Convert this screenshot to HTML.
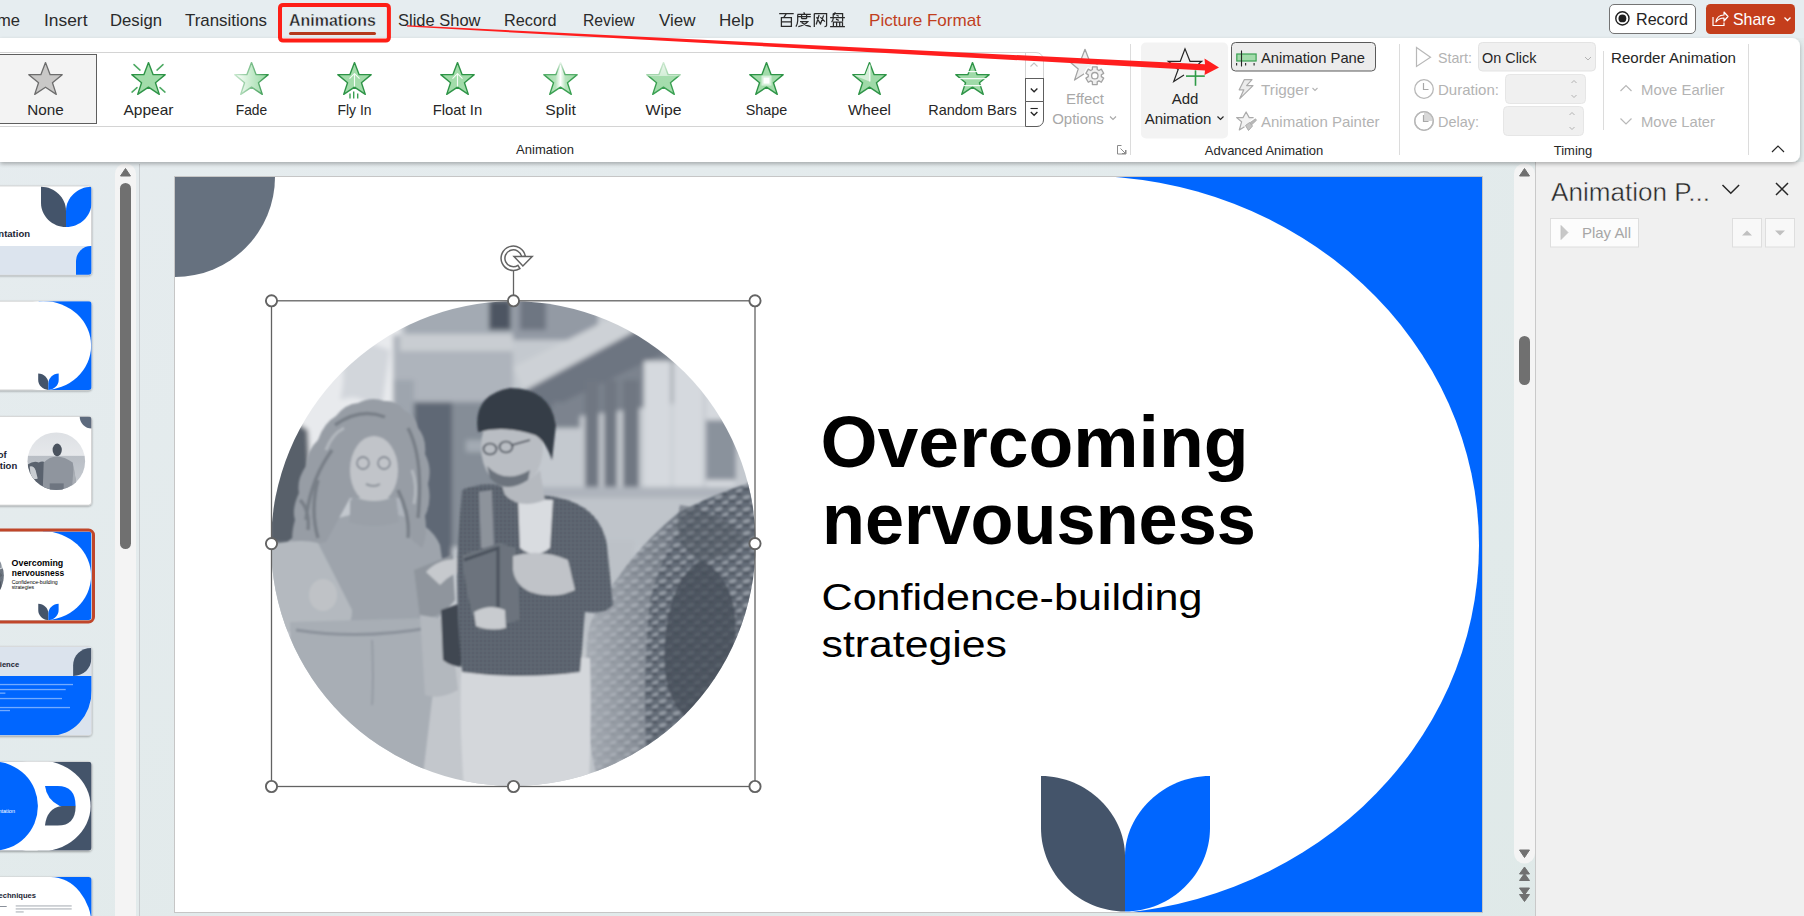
<!DOCTYPE html>
<html><head><meta charset="utf-8">
<style>
*{margin:0;padding:0}
html,body{width:1804px;height:916px;overflow:hidden;background:#e5ebee}
svg{display:block;font-family:"Liberation Sans", sans-serif}
</style></head><body>
<svg width="1804" height="916" viewBox="0 0 1804 916">
<defs><linearGradient id="bgG" x1="0" y1="0" x2="1" y2="1"><stop offset="0" stop-color="#e6ecef"/><stop offset="1" stop-color="#dfe9e8"/></linearGradient><linearGradient id="gFade" x1="0" y1="0" x2="1" y2="0"><stop offset="0" stop-color="#ffffff"/><stop offset="0.5" stop-color="#c6ebcc"/><stop offset="1" stop-color="#94d6a0"/></linearGradient><linearGradient id="gFadeS" x1="0" y1="0" x2="1" y2="0"><stop offset="0" stop-color="#c9e8cf"/><stop offset="1" stop-color="#2e9447"/></linearGradient><linearGradient id="gSplit" x1="0" y1="0" x2="1" y2="0"><stop offset="0" stop-color="#9ad8a4"/><stop offset="0.35" stop-color="#b5e3bc"/><stop offset="0.5" stop-color="#ffffff"/><stop offset="0.65" stop-color="#b5e3bc"/><stop offset="1" stop-color="#9ad8a4"/></linearGradient><linearGradient id="gSplitS" x1="0" y1="0" x2="0" y2="1"><stop offset="0" stop-color="#e8f5ea"/><stop offset="0.45" stop-color="#3aa052"/><stop offset="1" stop-color="#3aa052"/></linearGradient><linearGradient id="gWipe" x1="0" y1="0" x2="0" y2="1"><stop offset="0" stop-color="#eef8ef"/><stop offset="0.42" stop-color="#d3eed7"/><stop offset="0.43" stop-color="#a6ddae"/><stop offset="1" stop-color="#a2dcaa"/></linearGradient><linearGradient id="gWipeS" x1="0" y1="0" x2="0" y2="1"><stop offset="0" stop-color="#cde9d1"/><stop offset="0.42" stop-color="#9fd3a8"/><stop offset="0.45" stop-color="#3aa052"/><stop offset="1" stop-color="#3aa052"/></linearGradient><radialGradient id="gShape"><stop offset="0" stop-color="#ffffff"/><stop offset="0.35" stop-color="#c8ebce"/><stop offset="1" stop-color="#8fd49b"/></radialGradient><linearGradient id="bgAdd" x1="0" y1="0" x2="0" y2="1"><stop offset="0" stop-color="#f3f3f3"/><stop offset="1" stop-color="#f3f3f3"/></linearGradient><filter id="rsh" x="-5%" y="-20%" width="110%" height="140%"><feGaussianBlur in="SourceAlpha" stdDeviation="2"/><feOffset dy="1.5"/><feComponentTransfer><feFuncA type="linear" slope="0.28"/></feComponentTransfer><feMerge><feMergeNode/><feMergeNode in="SourceGraphic"/></feMerge></filter></defs>
<rect x="0" y="0" width="1804" height="916" fill="url(#bgG)"/>
<path d="M115,174 a10.5,10.5 0 0 1 21,0 V916 H115Z" fill="#f4f4f4"/>
<path d="M120.5,176 L125.5,168.5 L130.5,176Z" fill="#707070" stroke="#707070" stroke-width="1" stroke-linejoin="round"/>
<rect x="120" y="183" width="11" height="366" rx="5.5" fill="#707070"/>
<line x1="139.5" y1="164" x2="139.5" y2="916" stroke="#c9cdd0"/>
<rect x="174" y="176" width="1309" height="737" fill="#c6c6c6"/>
<path d="M1514,174 a10.5,10.5 0 0 1 21,0 V853 a10.5,10.5 0 0 1 -21,0Z" fill="#f4f4f4"/>
<path d="M1519.5,176 L1524.5,168.5 L1529.5,176Z" fill="#707070" stroke="#707070" stroke-width="1" stroke-linejoin="round"/>
<path d="M1519.5,850 L1529.5,850 L1524.5,857.5Z" fill="#707070" stroke="#707070" stroke-width="1" stroke-linejoin="round"/>
<rect x="1519" y="336" width="11" height="49" rx="5.5" fill="#707070"/>
<g fill="#707070" stroke="#707070" stroke-width="1" stroke-linejoin="round"><path d="M1519.5,874 L1524.5,867 L1529.5,874Z"/><path d="M1519.5,880.5 L1524.5,873.5 L1529.5,880.5Z"/><path d="M1519.5,888 L1529.5,888 L1524.5,895Z"/><path d="M1519.5,894.5 L1529.5,894.5 L1524.5,901.5Z"/></g>
<rect x="1535" y="162" width="269" height="754" fill="#f0f0f0"/>
<line x1="1535.5" y1="162" x2="1535.5" y2="916" stroke="#c9c9c9"/>
<text x="1551" y="201" font-size="26" fill="#262626" text-anchor="start" font-weight="400" textLength="159" lengthAdjust="spacingAndGlyphs" stroke="#f0f0f0" stroke-width="0.45">Animation P...</text>
<path d="M1722.5,185 l8.3,8.3 l8.3,-8.3" fill="none" stroke="#262626" stroke-width="1.5"/>
<path d="M1776,183 l12,12 M1788,183 l-12,12" fill="none" stroke="#262626" stroke-width="1.5"/>
<rect x="1550.5" y="218.5" width="88" height="28.5" fill="#fcfcfc" stroke="#dedede"/>
<path d="M1561,225.5 L1568,232.5 L1561,239.5Z" fill="#c8c8c8" stroke="#c0c0c0" stroke-width="0.8"/>
<text x="1582" y="238" font-size="15" fill="#a6a6a6" text-anchor="start" font-weight="400" textLength="49" lengthAdjust="spacingAndGlyphs" >Play All</text>
<rect x="1732.5" y="218.5" width="29" height="28.5" fill="#f8f8f8" stroke="#dedede"/>
<rect x="1765.5" y="218.5" width="29" height="28.5" fill="#f8f8f8" stroke="#dedede"/>
<path d="M1742,235.5 L1747,230.5 L1752,235.5Z M1775,230.5 L1785,230.5 L1780,235.5Z" fill="#c0c0c0"/>
<defs><clipPath id="slideClip"><rect x="175" y="177" width="1307" height="735"/></clipPath><clipPath id="photoClip"><circle cx="513.3" cy="543.6" r="242.3"/></clipPath></defs>
<defs><g id="slideContent">
<rect x="175" y="177" width="1307" height="735" fill="#ffffff"/>
<path d="M175,177 H275 A100,100 0 0 1 175,277Z" fill="#66717f"/>
<rect x="1080" y="177" width="402" height="735" fill="#0066ff"/>
<ellipse clip-path="url(#slideClip)" cx="1082" cy="545.3" rx="397" ry="369.6" fill="#ffffff"/>
<path d="M1041,776 C1087,776 1125,814 1125,856 V911.5 C1079,911.5 1041,874 1041,828Z" fill="#44546a"/>
<path d="M1210,776 C1164,776 1125,814 1125,856 V911.5 C1171,911.5 1210,874 1210,828Z" fill="#0066ff"/>
<text x="820.5" y="466.5" font-size="71.5" fill="#000000" text-anchor="start" font-weight="700" textLength="428" lengthAdjust="spacingAndGlyphs" >Overcoming</text>
<text x="822" y="544" font-size="71.5" fill="#000000" text-anchor="start" font-weight="700" textLength="434" lengthAdjust="spacingAndGlyphs" >nervousness</text>
<text x="821.5" y="609.5" font-size="37.5" fill="#000000" text-anchor="start" font-weight="400" textLength="381" lengthAdjust="spacingAndGlyphs" >Confidence-building</text>
<text x="821.5" y="656.5" font-size="37.5" fill="#000000" text-anchor="start" font-weight="400" textLength="185.5" lengthAdjust="spacingAndGlyphs" >strategies</text>
<defs><filter id="pb2" x="-20%" y="-20%" width="140%" height="140%"><feGaussianBlur stdDeviation="2.5"/></filter><filter id="pb1" x="-20%" y="-20%" width="140%" height="140%"><feGaussianBlur stdDeviation="1"/></filter><pattern id="plaid" width="4" height="4" patternUnits="userSpaceOnUse"><rect width="4" height="4" fill="#646c77"/><rect width="2" height="2" fill="#3f4651"/></pattern><pattern id="bushP" width="14" height="12" patternUnits="userSpaceOnUse"><rect width="14" height="12" fill="#646c77"/><path d="M0,6 q4,-5 9,-2 q-3,5 -9,2z M7,12 q4,-5 8,-3 q-3,5 -8,3z" fill="#949ba4"/><path d="M2,10 q3,-2 5,0 M9,3 q2,-2 4,0" stroke="#444c57" stroke-width="1.5" fill="none"/></pattern></defs>
<g clip-path="url(#photoClip)">
<g filter="url(#pb2)">
<rect x="265" y="295" width="500" height="500" fill="#c3c8ce"/>
<path d="M265,295 H400 V440 L300,470 H265Z" fill="#e8eaed"/>
<path d="M330,330 q20,30 10,70 q25,-10 40,20 l10,-70z" fill="#d2d6db"/>
<rect x="393" y="335" width="122" height="210" fill="#aeb4bc"/>
<rect x="405" y="295" width="110" height="40" fill="#a3aab3"/>
<rect x="400" y="334" width="115" height="17" fill="#c9cdd2"/>
<rect x="489" y="300" width="22" height="30" fill="#4d5562"/>
<rect x="452" y="402" width="63" height="145" fill="#858d97"/>
<rect x="466" y="440" width="40" height="12" fill="#a3aab3"/>
<rect x="414" y="402" width="38" height="160" fill="#5f6874"/>
<rect x="393" y="380" width="21" height="100" fill="#9ea5ae"/>
<path d="M268,425 q20,-10 40,5 l5,115 h-45z" fill="#58606b"/>
<rect x="513" y="295" width="250" height="250" fill="#c4c9cf"/>
<rect x="513" y="295" width="85" height="45" fill="#939aa4"/>
<rect x="520" y="298" width="26" height="32" fill="#6e7682"/>
<path d="M513,367 L625,311 L639,329 L524,391Z" fill="#cdd1d6"/>
<path d="M524,391 L639,329 L668,352 L545,412Z" fill="#6d7581"/>
<path d="M545,412 L668,352 L700,372 V400 L550,420Z" fill="#7b838e"/>
<rect x="553" y="402" width="27" height="26" fill="#7b838e"/>
<rect x="585" y="380" width="14" height="113" fill="#6f7782"/>
<rect x="604" y="380" width="13" height="113" fill="#6f7782"/>
<rect x="623" y="380" width="16" height="113" fill="#6f7782"/>
<rect x="644" y="361" width="27" height="126" fill="#d5d9de"/>
<rect x="673" y="361" width="30" height="126" fill="#d5d9de"/>
<rect x="706" y="361" width="29" height="126" fill="#d5d9de"/>
<rect x="706" y="420" width="30" height="60" fill="#8a929c"/>
<rect x="513" y="487" width="250" height="11" fill="#aeb4bc"/>
<rect x="540" y="498" width="225" height="50" fill="#bfc4ca"/>
<rect x="575" y="540" width="60" height="250" fill="#bcc1c7"/>
<rect x="400" y="650" width="190" height="145" fill="#c3c7cc"/>
</g>
<g filter="url(#pb1)">
<path d="M765,470 L746,484 Q700,500 677,514 Q640,545 618,578 Q595,605 589,630 Q584,675 587,710 Q590,760 605,800 H770Z" fill="url(#bushP)"/>
<path d="M700,560 Q740,580 735,640 Q720,700 690,720 Q660,700 665,640 Q670,580 700,560Z" fill="#454d58" opacity="0.75"/>
<defs><linearGradient id="bushL" x1="0" y1="0" x2="1" y2="0"><stop offset="0" stop-color="#b3b8bf" stop-opacity="0.85"/><stop offset="1" stop-color="#b3b8bf" stop-opacity="0"/></linearGradient></defs>
<path d="M677,514 Q640,545 618,578 Q595,605 589,630 Q584,675 587,710 Q590,760 605,800 H650 Q640,700 650,600 Q665,540 700,505Z" fill="url(#bushL)"/>
<path d="M680,505 Q720,510 745,540 Q730,560 700,560 Q670,545 680,505Z" fill="#4f5762" opacity="0.5"/>
</g>
<g filter="url(#pb1)">
<path d="M350,500 H396 L398,515 Q430,522 440,545 L448,600 Q440,625 425,625 L290,628 Q272,600 275,560 Q285,530 350,515Z" fill="#9ea4ac"/>
<path d="M294,548 Q289.9,537.8 295,520 Q291.5,508.8 299,493 Q296.5,479.4 306,466 Q306.8,450.1 318,440 Q323.8,422.9 336,416 Q345.9,403.6 358,403 Q371.8,396.1 384,401 Q396.5,400.0 404,410 Q414.8,414.4 418,428 Q426.6,437.8 425,454 Q432.4,468.0 428,484 Q432.2,501.7 425,516 Q428.1,535.8 422,548 L412,540 Q406,520 400,498 L350,498 Q338,520 326,542 Z" fill="#979da5"/>
<path d="M306,520 q4,-40 26,-70 M408,428 q16,30 10,90 M318,480 q-8,30 0,58 M398,490 q12,24 10,48 M335,425 q25,-18 50,-8 M300,500 q10,10 8,30" stroke="#6e757e" stroke-width="3.5" fill="none" opacity="0.75"/>
<path d="M326,450 q6,-16 18,-22 M412,470 q6,16 2,34" stroke="#c5c9ce" stroke-width="3" fill="none" opacity="0.6"/>
<ellipse cx="374" cy="470" rx="24" ry="34" fill="#c1c4c9"/>
<g fill="none" stroke="#6e7580" stroke-width="1.3"><circle cx="363" cy="463" r="6"/><circle cx="384" cy="463" r="6"/></g>
<path d="M366,484 q8,4 14,0" stroke="#8a9098" stroke-width="2" fill="none"/>
<path d="M352,496 Q374,506 396,496 L399,522 Q374,530 349,522Z" fill="#9aa0a8"/>
<path d="M272,545 Q300,538 318,543 L352,610 Q352,628 340,630 L285,632 Q272,620 272,600Z" fill="#b4b9bf"/>
<ellipse cx="323" cy="595" rx="14" ry="16" fill="#bfc2c6"/>
<path d="M414,570 L452,555 L455,600 Q440,620 420,618Z" fill="#8f959d"/>
<path d="M426,572 Q440,556 466,560 L470,568 Q452,572 440,585Z" fill="#c6c9cd"/>
<path d="M290,622 L430,618 Q440,660 432,700 L420,800 H330 L318,740 Q296,690 290,650Z" fill="#a8aeb5"/>
<path d="M372,640 Q374,680 372,705" stroke="#8d949c" stroke-width="2" fill="none" opacity="0.7"/>
<path d="M296,630 Q360,640 428,628" stroke="#8b929b" stroke-width="3" fill="none"/>
<path d="M420,615 L450,620 L458,690 Q440,700 425,695Z" fill="#b3b8be"/>
<path d="M441,610 L470,600 L475,665 Q455,670 443,660Z" fill="#3f4651"/>
<path d="M462,655 L590,658 Q592,720 588,800 H465 Q458,720 462,655Z" fill="#d4d7db"/>
<path d="M462,490 Q490,478 520,492 L555,497 Q600,505 607,545 L613,605 Q605,615 585,612 L580,672 Q520,680 462,672 Q455,600 458,540Z" fill="url(#plaid)"/>
<path d="M518,498 L553,500 L550,548 Q535,560 520,548Z" fill="#d9dce0"/>
<path d="M479,492 L492,490 L494,548 L481,548Z" fill="#8d939b"/>
<ellipse cx="512" cy="447" rx="31" ry="42" fill="#b9bdc3"/>
<path d="M500,480 Q520,495 540,470 L545,500 Q520,510 505,495Z" fill="#b5b9bf"/>
<path d="M478,432 Q472,395 510,388 Q550,388 556,425 L552,460 Q545,440 535,435 Q505,425 478,432Z" fill="#353c47"/>
<path d="M487,466 Q505,485 530,470 L528,480 Q505,495 490,478Z" fill="#6c737d"/>
<g fill="none" stroke="#3a414c" stroke-width="1.6"><ellipse cx="490" cy="449" rx="6.5" ry="5.5"/><ellipse cx="506" cy="447" rx="6.5" ry="5.5"/><path d="M512,445 l18,-5"/></g>
<path d="M462,555 L500,543 L516,548 L520,620 L478,630 Q466,600 462,555Z" fill="#6c737d"/>
<path d="M464,560 L498,548 V620" stroke="#4a515c" stroke-width="3" fill="none"/>
<path d="M474,612 Q490,603 505,610 L506,628 Q490,632 476,626Z" fill="#c8cbcf"/>
<path d="M513,556 Q540,548 568,560 L575,590 Q555,600 530,592 Q515,585 513,570Z" fill="#c0c3c8"/>
</g>
</g>
</g></defs>
<g clip-path="url(#slideClip)"><use href="#slideContent"/></g>
<rect x="271.5" y="300.8" width="483.5" height="485.7" fill="none" stroke="#636363" stroke-width="1.3"/>
<line x1="513.5" y1="271" x2="513.5" y2="295" stroke="#636363" stroke-width="1.3"/>
<circle cx="271.5" cy="300.8" r="5.6" fill="#ffffff" stroke="#636363" stroke-width="1.9"/>
<circle cx="271.5" cy="543.6" r="5.6" fill="#ffffff" stroke="#636363" stroke-width="1.9"/>
<circle cx="271.5" cy="786.5" r="5.6" fill="#ffffff" stroke="#636363" stroke-width="1.9"/>
<circle cx="513.5" cy="300.8" r="5.6" fill="#ffffff" stroke="#636363" stroke-width="1.9"/>
<circle cx="513.5" cy="786.5" r="5.6" fill="#ffffff" stroke="#636363" stroke-width="1.9"/>
<circle cx="755" cy="300.8" r="5.6" fill="#ffffff" stroke="#636363" stroke-width="1.9"/>
<circle cx="755" cy="543.6" r="5.6" fill="#ffffff" stroke="#636363" stroke-width="1.9"/>
<circle cx="755" cy="786.5" r="5.6" fill="#ffffff" stroke="#636363" stroke-width="1.9"/>
<path d="M525.3,256.2 A12.2,12.2 0 1 0 519.9,268.5 L517.9,265.3 A8.4,8.4 0 1 1 521.6,256.8 Z" fill="#ffffff" stroke="#636363" stroke-width="1.5"/>
<path d="M514,256.4 L532.2,256.4 L522.9,266Z" fill="#ffffff" stroke="#636363" stroke-width="1.5" stroke-linejoin="miter"/>
<defs><filter id="tsh" x="-10%" y="-10%" width="120%" height="130%"><feGaussianBlur in="SourceAlpha" stdDeviation="0.8"/><feOffset dy="0.6"/><feComponentTransfer><feFuncA type="linear" slope="0.35"/></feComponentTransfer><feMerge><feMergeNode/><feMergeNode in="SourceGraphic"/></feMerge></filter></defs>
<defs><clipPath id="tc0"><rect x="-66.3" y="186" width="157.8" height="88.7" rx="3"/></clipPath></defs>
<rect x="-66.3" y="186" width="157.8" height="88.7" rx="3" fill="#fff" stroke="#cfcfcf" stroke-width="0.8" filter="url(#tsh)"/>
<g clip-path="url(#tc0)">
<g transform="translate(-66.3,186)">
<rect x="0" y="60" width="158" height="29" fill="#dce4ee"/>
<path d="M142.3,89 V75 A15,15 0 0 1 157.3,60 H158 V89Z" fill="#0066ff"/>
<path d="M107.3,0.8 C121.05000000000001,0.8 132.3,12.056000000000003 132.3,24.92 V41 C118.55000000000001,41 107.3,29.744 107.3,16.880000000000003Z" fill="#44546a"/>
<path d="M157.8,0.8 C143.775,0.8 132.3,12.056000000000003 132.3,24.92 V41 C146.32500000000002,41 157.8,29.744 157.8,16.880000000000003Z" fill="#0066ff"/>
<text x="96.3" y="50.5" font-size="9.5" fill="#1b2433" text-anchor="end" font-weight="700" >Effective presentation</text>
</g></g>
<defs><clipPath id="tc1"><rect x="-66.3" y="301.2" width="157.8" height="88.7" rx="3"/></clipPath></defs>
<rect x="-66.3" y="301.2" width="157.8" height="88.7" rx="3" fill="#fff" stroke="#cfcfcf" stroke-width="0.8" filter="url(#tsh)"/>
<g clip-path="url(#tc1)">
<g transform="translate(-66.3,301.2)">
<rect x="105" y="0" width="53" height="89" fill="#0066ff"/>
<ellipse cx="109.5" cy="44.45" rx="47.9" ry="44.6" fill="#fff"/>
<path d="M104.5,72.4 C110.11,72.4 114.7,76.964 114.7,82.18 V88.7 C109.09,88.7 104.5,84.136 104.5,78.92Z" fill="#44546a"/>
<path d="M125,72.4 C119.33500000000001,72.4 114.7,76.964 114.7,82.18 V88.7 C120.365,88.7 125,84.136 125,78.92Z" fill="#0066ff"/>
</g></g>
<defs><clipPath id="tc2"><rect x="-66.3" y="416.4" width="157.8" height="88.7" rx="3"/></clipPath></defs>
<rect x="-66.3" y="416.4" width="157.8" height="88.7" rx="3" fill="#fff" stroke="#cfcfcf" stroke-width="0.8" filter="url(#tsh)"/>
<g clip-path="url(#tc2)">
<g transform="translate(-66.3,416.4)">
<path d="M158,0 V12 A12,12 0 0 1 146,0Z" fill="#5d6a7d"/>
<text x="73" y="42" font-size="9.5" fill="#1b2433" text-anchor="end" font-weight="700" >Importance of</text>
<text x="83.5" y="52.4" font-size="9.5" fill="#1b2433" text-anchor="end" font-weight="700" >preparation</text>
<defs><clipPath id="manC"><circle cx="122.6" cy="44.8" r="28.8"/></clipPath><linearGradient id="manBg" x1="0" y1="0" x2="0" y2="1"><stop offset="0" stop-color="#dde0e4"/><stop offset="0.4" stop-color="#e6e8eb"/><stop offset="0.41" stop-color="#b9bec5"/><stop offset="1" stop-color="#c9cdd3"/></linearGradient></defs>
<g clip-path="url(#manC)"><rect x="92" y="15" width="61" height="60" fill="url(#manBg)"/><path d="M94,48 q6,-4 11,-2 q6,-3 8,3 l4,26 h-25z" fill="#5a626e"/><path d="M96,50 q4,-1 6,4 l2,8 q-4,2 -7,-2z" fill="#c9cdd2"/><path d="M109,75 L110,46 Q116,40 123,40 Q131,40 139,46 L144,75z" fill="#8f959e"/><path d="M140,50 l4,25 h-6z" fill="#a9aeb5"/><ellipse cx="123.5" cy="33.5" rx="4.6" ry="6.3" fill="#4a525e"/><rect x="116" y="67" width="14" height="8" fill="#6e7580"/></g>
</g></g>
<defs><clipPath id="tc3"><rect x="-66.3" y="531.4" width="157.8" height="88.7" rx="3"/></clipPath></defs>
<rect x="-66.3" y="531.4" width="157.8" height="88.7" rx="3" fill="#fff" stroke="#cfcfcf" stroke-width="0.8" filter="url(#tsh)"/>
<g clip-path="url(#tc3)">
<g transform="translate(-66.3,531.4)">
<use href="#slideContent" transform="scale(0.1207) translate(-175,-177)"/>
</g></g>
<defs><clipPath id="tc4"><rect x="-66.3" y="646.6" width="157.8" height="88.7" rx="3"/></clipPath></defs>
<rect x="-66.3" y="646.6" width="157.8" height="88.7" rx="3" fill="#fff" stroke="#cfcfcf" stroke-width="0.8" filter="url(#tsh)"/>
<g clip-path="url(#tc4)">
<g transform="translate(-66.3,646.6)">
<rect x="0" y="0" width="158" height="89" fill="#dbe3ed"/>
<path d="M0,29.3 H158 V44 A41,45 0 0 1 116.3,89 H0Z" fill="#0066ff"/>
<path d="M157.6,1.5 V12 C157.6,22 150,29.3 139.4,29.3 V19 C139.4,9 147,1.5 157.6,1.5Z" fill="#44546a"/>
<text x="85.5" y="20.7" font-size="7.6" fill="#1b2433" text-anchor="end" font-weight="700" >Understanding the audience</text>
<rect x="0" y="37.3" width="139.3" height="1.3" fill="#ffffff" opacity="0.45"/>
<rect x="0" y="42.3" width="132.0" height="1.3" fill="#ffffff" opacity="0.45"/>
<rect x="0" y="45.9" width="71.7" height="1.3" fill="#ffffff" opacity="0.45"/>
<rect x="0" y="51.3" width="128.3" height="1.3" fill="#ffffff" opacity="0.45"/>
<rect x="0" y="60.3" width="136.3" height="1.3" fill="#ffffff" opacity="0.45"/>
<rect x="0" y="63.3" width="76.3" height="1.3" fill="#ffffff" opacity="0.45"/>
</g></g>
<defs><clipPath id="tc5"><rect x="-66.3" y="761.8" width="157.8" height="88.7" rx="3"/></clipPath></defs>
<rect x="-66.3" y="761.8" width="157.8" height="88.7" rx="3" fill="#fff" stroke="#cfcfcf" stroke-width="0.8" filter="url(#tsh)"/>
<g clip-path="url(#tc5)">
<g transform="translate(-66.3,761.8)">
<rect x="0" y="0" width="158" height="89" fill="#44546a"/>
<ellipse cx="103.7" cy="44.3" rx="53.2" ry="46" fill="#ffffff"/>
<rect x="0" y="0" width="104" height="89" fill="#ffffff"/>
<circle cx="59.6" cy="44.3" r="44.6" fill="#0066ff"/>
<path d="M111.3,24.3 H124 Q141.9,24.3 141.9,44.2 H126 Q113,38 111.3,24.3Z" fill="#0066ff"/>
<path d="M111.3,63.8 Q113,46.5 128,44.2 H141.9 Q141.9,63.8 124,63.8Z" fill="#44546a"/>
<text x="81.3" y="51.7" font-size="5.5" fill="#ffffff" text-anchor="end" font-weight="400" >Presentation</text>
</g></g>
<defs><clipPath id="tc6"><rect x="-66.3" y="877" width="157.8" height="88.7" rx="3"/></clipPath></defs>
<rect x="-66.3" y="877" width="157.8" height="88.7" rx="3" fill="#fff" stroke="#cfcfcf" stroke-width="0.8" filter="url(#tsh)"/>
<g clip-path="url(#tc6)">
<g transform="translate(-66.3,877)">
<rect x="110" y="0" width="48" height="89" fill="#0066ff"/>
<ellipse cx="117" cy="50" rx="41" ry="50" fill="#fff"/>
<rect x="0" y="0" width="117.5" height="89" fill="#ffffff"/>
<text x="102.3" y="21" font-size="7.6" fill="#1b2433" text-anchor="end" font-weight="700" >Body language techniques</text>
<rect x="62" y="29" width="11" height="1" fill="#8a909a"/>
<rect x="82" y="28.5" width="56" height="0.9" fill="#9aa0a8"/>
<rect x="82" y="31.5" width="56" height="0.9" fill="#9aa0a8"/>
<rect x="82" y="34.5" width="8" height="0.9" fill="#9aa0a8"/>
</g></g>
<path d="M-10,530 H88.5 a5,5 0 0 1 5,5 V617 a5,5 0 0 1 -5,5 H-10" fill="none" stroke="#c0462a" stroke-width="3"/>
<rect x="0" y="0" width="1804" height="38" fill="#e6edf0"/>
<text x="-3" y="26" font-size="17" fill="#2a2a2a" text-anchor="start" font-weight="400" textLength="23" lengthAdjust="spacingAndGlyphs" >me</text>
<text x="44" y="26" font-size="17" fill="#2a2a2a" text-anchor="start" font-weight="400" textLength="43.5" lengthAdjust="spacingAndGlyphs" >Insert</text>
<text x="110" y="26" font-size="17" fill="#2a2a2a" text-anchor="start" font-weight="400" textLength="52" lengthAdjust="spacingAndGlyphs" >Design</text>
<text x="185" y="26" font-size="17" fill="#2a2a2a" text-anchor="start" font-weight="400" textLength="82" lengthAdjust="spacingAndGlyphs" >Transitions</text>
<text x="398" y="26" font-size="17" fill="#2a2a2a" text-anchor="start" font-weight="400" textLength="82.5" lengthAdjust="spacingAndGlyphs" >Slide Show</text>
<text x="504" y="26" font-size="17" fill="#2a2a2a" text-anchor="start" font-weight="400" textLength="52.5" lengthAdjust="spacingAndGlyphs" >Record</text>
<text x="583" y="26" font-size="17" fill="#2a2a2a" text-anchor="start" font-weight="400" textLength="51.5" lengthAdjust="spacingAndGlyphs" >Review</text>
<text x="659" y="26" font-size="17" fill="#2a2a2a" text-anchor="start" font-weight="400" textLength="36.5" lengthAdjust="spacingAndGlyphs" >View</text>
<text x="719" y="26" font-size="17" fill="#2a2a2a" text-anchor="start" font-weight="400" textLength="35" lengthAdjust="spacingAndGlyphs" >Help</text>
<text x="289" y="26" font-size="17" fill="#1f1f1f" text-anchor="start" font-weight="700" textLength="87" lengthAdjust="spacingAndGlyphs" stroke="#e6edf0" stroke-width="0.4">Animations</text>
<text x="869" y="26" font-size="17" fill="#c13f1e" text-anchor="start" font-weight="400" textLength="112" lengthAdjust="spacingAndGlyphs" >Picture Format</text>
<g fill="none" stroke="#2a2a2a" stroke-width="1.25"><path d="M779.2,13.5 H793.7 M786.2,13.9 L784,17.1 M781.4,17.1 V26.9 M791.4,17.1 V26.9 M781.4,17.6 H791.4 M781.4,21.8 H791.4 M781.4,26.3 H791.4"/><path d="M803.7,12.4 L804.6,13.8 M797.5,14.4 H810.8 M797.7,14.4 V20.8 Q797.5,24.5 795.9,26.7 M798.3,16.5 H810.8 M801.6,14.6 V18.7 M806.6,14.6 V18.7 M801.6,18.7 H806.6 M800,21.6 H807.8 Q805,25 798.3,26.6 M801.6,22.5 Q805,25.5 810.8,26.6"/><path d="M814.3,13.5 V26.9 M814.3,13.5 H826.6 V25.6 Q826.6,26.6 824.5,26.6 M819.1,15 L816.2,24.5 M816.6,17.1 L820.7,24.5 M823.6,15.4 L820.3,24.5 M820.3,17.1 L824.9,21.6"/><path d="M835.3,12.3 L834,15 M833.2,13.5 H842.6 V21.4 M833.2,13.5 V18.5 Q833,21 831.5,22 M830.1,17.6 H844.9 M836.5,15.2 L838.8,16.2 M836,19.2 L838.8,20.3 M833,22.2 H842.5 M833.4,22.2 V26.4 M836.6,22.2 V26.4 M839.7,22.2 V26.4 M842.5,22.2 V26.4 M830.1,26.6 H844.9"/></g>
<rect x="1609.5" y="4.5" width="86" height="29" rx="4.5" fill="#fff" stroke="#747474"/>
<circle cx="1622.4" cy="18.4" r="6.6" fill="none" stroke="#1f1f1f" stroke-width="1.4"/><circle cx="1622.4" cy="18.4" r="3.9" fill="#1f1f1f"/>
<text x="1636" y="25" font-size="17" fill="#242424" text-anchor="start" font-weight="400" textLength="52" lengthAdjust="spacingAndGlyphs" >Record</text>
<rect x="1706" y="4" width="89" height="30" rx="4.5" fill="#c43e1c"/>
<path d="M1713,17 v8.5 h11 v-3" fill="none" stroke="#fff" stroke-width="1.2"/><path d="M1716,22 q1,-7 8,-7 v-3 l4,4.5 l-4,4.5 v-3 q-5,0 -8,4z" fill="none" stroke="#fff" stroke-width="1.2" stroke-linejoin="round"/>
<text x="1733" y="25" font-size="17" fill="#ffffff" text-anchor="start" font-weight="400" textLength="42.5" lengthAdjust="spacingAndGlyphs" >Share</text>
<path d="M1784.5,17.5 l3,3 l3,-3" fill="none" stroke="#fff" stroke-width="1.3"/>
<path d="M0,38 H1792 a8,8 0 0 1 8,8 V154 a8,8 0 0 1 -8,8 H0Z" fill="#fff" filter="url(#rsh)"/>
<path d="M0,52.5 H1036 a7.5,7.5 0 0 1 7.5,7.5 V119 a7.5,7.5 0 0 1 -7.5,7.5 H0" fill="none" stroke="#d4d4d4"/>
<rect x="-2" y="54.5" width="98.5" height="69" fill="#f3f3f3" stroke="#5e5e5e"/>
<line x1="1025.5" y1="52.5" x2="1025.5" y2="126.5" stroke="#d4d4d4"/>
<path d="M1030.5,66.5 l3.5,-3.5 l3.5,3.5" fill="none" stroke="#c4c4c4" stroke-width="1.1"/>
<rect x="1025.5" y="78.5" width="18" height="23" fill="#fff" stroke="#5e5e5e"/>
<path d="M1030.8,88.5 l3.3,3.3 l3.3,-3.3" fill="none" stroke="#262626" stroke-width="1.3"/>
<path d="M1025.5,101.5 H1043.5 V120 a6.5,6.5 0 0 1 -6.5,6.5 H1025.5Z" fill="#fff" stroke="#5e5e5e"/>
<line x1="1030.5" y1="108.5" x2="1037.8" y2="108.5" stroke="#262626" stroke-width="1.1"/><path d="M1030.8,112 l3.3,3.3 l3.3,-3.3" fill="none" stroke="#262626" stroke-width="1.3"/>
<path d="M0,0 L4.65,12.05 L16.7,12.05 L6.95,20.2 L10.8,31.75 L0,24.6 L-10.8,31.75 L-6.95,20.2 L-16.7,12.05 L-4.65,12.05Z" transform="translate(45.5,62.6)" stroke-linejoin="round" fill="#c9c8c7" stroke="#6d6d6d" stroke-width="1.3" stroke-linejoin="miter"/>
<text x="45.5" y="115" font-size="15" fill="#262626" text-anchor="middle" font-weight="400" textLength="36.5" lengthAdjust="spacingAndGlyphs" >None</text>
<path d="M0,0 L4.65,12.05 L16.7,12.05 L6.95,20.2 L10.8,31.75 L0,24.6 L-10.8,31.75 L-6.95,20.2 L-16.7,12.05 L-4.65,12.05Z" transform="translate(148.5,62.6)" stroke-linejoin="round" fill="#a2dcaa" stroke="#2e9447" stroke-width="1.4"/>
<g transform="translate(148.5,62.6)" stroke-linejoin="round" stroke="#3aa052" stroke-width="1.5" stroke-linecap="round" opacity="0.9"><line x1="-14.5" y1="2" x2="-8.5" y2="7.5"/><line x1="14.5" y1="2" x2="8.5" y2="7.5"/><line x1="-16.5" y1="29.5" x2="-11.5" y2="25"/><line x1="16.5" y1="29.5" x2="11.5" y2="25"/></g>
<text x="148.5" y="115" font-size="15" fill="#262626" text-anchor="middle" font-weight="400" textLength="50" lengthAdjust="spacingAndGlyphs" >Appear</text>
<path d="M0,0 L4.65,12.05 L16.7,12.05 L6.95,20.2 L10.8,31.75 L0,24.6 L-10.8,31.75 L-6.95,20.2 L-16.7,12.05 L-4.65,12.05Z" transform="translate(251.5,62.6)" stroke-linejoin="round" fill="url(#gFade)" stroke="url(#gFadeS)" stroke-width="1.4"/>
<text x="251.5" y="115" font-size="15" fill="#262626" text-anchor="middle" font-weight="400" textLength="31.5" lengthAdjust="spacingAndGlyphs" >Fade</text>
<path d="M0,0 L4.65,12.05 L16.7,12.05 L6.95,20.2 L10.8,31.75 L0,24.6 L-10.8,31.75 L-6.95,20.2 L-16.7,12.05 L-4.65,12.05Z" transform="translate(354.5,62.6)" stroke-linejoin="round" fill="#a2dcaa" stroke="#2e9447" stroke-width="1.4"/>
<g transform="translate(354.5,62.6)" stroke-linejoin="round" stroke="#ffffff" stroke-width="1.1" fill="none" opacity="0.9"><line x1="0" y1="11" x2="0" y2="24"/><path d="M-5,16 L0,11 L5,16"/></g>
<g transform="translate(354.5,62.6)" stroke-linejoin="round" stroke="#3aa052" stroke-width="1.4"><line x1="-4.5" y1="31" x2="-4.5" y2="36"/><line x1="-0.8" y1="29" x2="-0.8" y2="36"/><line x1="3.2" y1="31" x2="3.2" y2="36"/></g>
<text x="354.5" y="115" font-size="15" fill="#262626" text-anchor="middle" font-weight="400" textLength="34" lengthAdjust="spacingAndGlyphs" >Fly In</text>
<path d="M0,0 L4.65,12.05 L16.7,12.05 L6.95,20.2 L10.8,31.75 L0,24.6 L-10.8,31.75 L-6.95,20.2 L-16.7,12.05 L-4.65,12.05Z" transform="translate(457.5,62.6)" stroke-linejoin="round" fill="#a2dcaa" stroke="#2e9447" stroke-width="1.4"/>
<g transform="translate(457.5,62.6)" stroke-linejoin="round" stroke="#ffffff" stroke-width="1.1" fill="none" opacity="0.9"><line x1="0" y1="11" x2="0" y2="24"/><path d="M-5,16 L0,11 L5,16"/></g>
<text x="457.5" y="115" font-size="15" fill="#262626" text-anchor="middle" font-weight="400" textLength="49.5" lengthAdjust="spacingAndGlyphs" >Float In</text>
<path d="M0,0 L4.65,12.05 L16.7,12.05 L6.95,20.2 L10.8,31.75 L0,24.6 L-10.8,31.75 L-6.95,20.2 L-16.7,12.05 L-4.65,12.05Z" transform="translate(560.5,62.6)" stroke-linejoin="round" fill="url(#gSplit)" stroke="url(#gSplitS)" stroke-width="1.4"/>
<text x="560.5" y="115" font-size="15" fill="#262626" text-anchor="middle" font-weight="400" textLength="30.5" lengthAdjust="spacingAndGlyphs" >Split</text>
<path d="M0,0 L4.65,12.05 L16.7,12.05 L6.95,20.2 L10.8,31.75 L0,24.6 L-10.8,31.75 L-6.95,20.2 L-16.7,12.05 L-4.65,12.05Z" transform="translate(663.5,62.6)" stroke-linejoin="round" fill="url(#gWipe)" stroke="url(#gWipeS)" stroke-width="1.4"/>
<text x="663.5" y="115" font-size="15" fill="#262626" text-anchor="middle" font-weight="400" textLength="36" lengthAdjust="spacingAndGlyphs" >Wipe</text>
<path d="M0,0 L4.65,12.05 L16.7,12.05 L6.95,20.2 L10.8,31.75 L0,24.6 L-10.8,31.75 L-6.95,20.2 L-16.7,12.05 L-4.65,12.05Z" transform="translate(766.5,62.6)" stroke-linejoin="round" fill="#a2dcaa" stroke="#2e9447" stroke-width="1.4"/>
<g transform="translate(766.5,62.6)" stroke-linejoin="round"><rect x="-5" y="13" width="10" height="10" fill="#d5efd9"/><rect x="-3" y="15" width="6" height="6" fill="#ffffff"/></g>
<text x="766.5" y="115" font-size="15" fill="#262626" text-anchor="middle" font-weight="400" textLength="41.5" lengthAdjust="spacingAndGlyphs" >Shape</text>
<path d="M0,0 L4.65,12.05 L16.7,12.05 L6.95,20.2 L10.8,31.75 L0,24.6 L-10.8,31.75 L-6.95,20.2 L-16.7,12.05 L-4.65,12.05Z" transform="translate(869.5,62.6)" stroke-linejoin="round" fill="#9fdaa8" stroke="#2e9447" stroke-width="1.4"/>
<path d="M0,1.5 L0,19 L-15.5,12.6 L-4.4,12.6Z" transform="translate(869.5,62.6)" stroke-linejoin="round" fill="#d4eed8"/>
<path d="M0.3,2 V19" transform="translate(869.5,62.6)" stroke-linejoin="round" stroke="#ffffff" stroke-width="1.2"/>
<text x="869.5" y="115" font-size="15" fill="#262626" text-anchor="middle" font-weight="400" textLength="43" lengthAdjust="spacingAndGlyphs" >Wheel</text>
<path d="M0,0 L4.65,12.05 L16.7,12.05 L6.95,20.2 L10.8,31.75 L0,24.6 L-10.8,31.75 L-6.95,20.2 L-16.7,12.05 L-4.65,12.05Z" transform="translate(972.5,62.6)" stroke-linejoin="round" fill="#9fdaa8" stroke="#2e9447" stroke-width="1.4"/>
<g transform="translate(972.5,62.6)" stroke-linejoin="round" stroke="#ffffff" stroke-width="1.2" opacity="0.9"><line x1="-6" y1="9" x2="6" y2="9"/><line x1="-16" y1="16" x2="16" y2="16"/><line x1="-9" y1="23" x2="9" y2="23"/></g>
<text x="972.5" y="115" font-size="15" fill="#262626" text-anchor="middle" font-weight="400" textLength="88.5" lengthAdjust="spacingAndGlyphs" >Random Bars</text>
<path d="M0,0 L4.65,12.05 L16.7,12.05 L6.95,20.2 L10.8,31.75 L0,24.6 L-10.8,31.75 L-6.95,20.2 L-16.7,12.05 L-4.65,12.05Z" transform="translate(1085,49.3) scale(0.97)" fill="#f0f0f0" stroke="#a3a3a3" stroke-width="1.3" stroke-linejoin="round"/>
<path d="M1097.23,81.84 L1097.18,84.59 L1092.42,84.59 L1092.37,81.84 L1090.70,80.87 L1088.29,82.21 L1085.91,78.08 L1088.27,76.66 L1088.27,74.74 L1085.91,73.32 L1088.29,69.19 L1090.70,70.53 L1092.37,69.56 L1092.42,66.81 L1097.18,66.81 L1097.23,69.56 L1098.90,70.53 L1101.31,69.19 L1103.69,73.32 L1101.33,74.74 L1101.33,76.66 L1103.69,78.08 L1101.31,82.21 L1098.90,80.87Z" fill="#f0f0f0" stroke="#ffffff" stroke-width="4" stroke-linejoin="round"/><path d="M1097.23,81.84 L1097.18,84.59 L1092.42,84.59 L1092.37,81.84 L1090.70,80.87 L1088.29,82.21 L1085.91,78.08 L1088.27,76.66 L1088.27,74.74 L1085.91,73.32 L1088.29,69.19 L1090.70,70.53 L1092.37,69.56 L1092.42,66.81 L1097.18,66.81 L1097.23,69.56 L1098.90,70.53 L1101.31,69.19 L1103.69,73.32 L1101.33,74.74 L1101.33,76.66 L1103.69,78.08 L1101.31,82.21 L1098.90,80.87Z" fill="#f0f0f0" stroke="#a3a3a3" stroke-width="1.3" stroke-linejoin="round"/><circle cx="1094.8" cy="75.7" r="3.2" fill="#fff" stroke="#a3a3a3" stroke-width="1.3"/>
<text x="1085" y="104" font-size="15" fill="#a8a8a8" text-anchor="middle" font-weight="400" >Effect</text>
<text x="1078" y="123.5" font-size="15" fill="#a8a8a8" text-anchor="middle" font-weight="400" >Options</text>
<path d="M1110,116.5 l3,3 l3,-3" fill="none" stroke="#a8a8a8" stroke-width="1.1"/>
<text x="545" y="154" font-size="13" fill="#262626" text-anchor="middle" font-weight="400" >Animation</text>
<path d="M1117.5,145.5 h4 M1117.5,145.5 v8.5 h8.5 v-4 M1120.5,148.5 l5,5 M1125.5,150 v3.5 h-3.5" fill="none" stroke="#8a8a8a" stroke-width="1"/>
<line x1="1130.5" y1="44" x2="1130.5" y2="155" stroke="#dcdcdc"/>
<rect x="1141" y="42.5" width="87" height="96" rx="5" fill="#f3f3f3"/>
<path d="M1198.5,64 L1201.7,61.3 L1190,61.3 L1185,48.9 L1180.3,61.3 L1168.3,61.3 L1178.2,69.5 L1173.7,81.5 L1184,75" fill="none" stroke="#262626" stroke-width="1.2" stroke-linejoin="miter"/>
<g stroke="#2e9a46" stroke-width="1.6"><line x1="1186" y1="76.1" x2="1204.8" y2="76.1"/><line x1="1195.5" y1="70.3" x2="1195.5" y2="85.8"/></g>
<text x="1185" y="104" font-size="15" fill="#262626" text-anchor="middle" font-weight="400" >Add</text>
<text x="1178" y="123.5" font-size="15" fill="#262626" text-anchor="middle" font-weight="400" >Animation</text>
<path d="M1217.5,116.5 l3,3 l3,-3" fill="none" stroke="#262626" stroke-width="1.2"/>
<rect x="1231.5" y="42.5" width="144" height="28.5" rx="4" fill="#ececec" stroke="#5a5a5a"/>
<rect x="1236.8" y="54" width="19.3" height="7" fill="#a3dbab" stroke="#3aa052" stroke-width="1.2"/>
<g stroke="#262626" stroke-width="1.1"><line x1="1241.5" y1="50.5" x2="1241.5" y2="66.5"/></g><g fill="#333"><rect x="1236" y="63" width="1.2" height="2.5"/><rect x="1245" y="63" width="1.2" height="2.5"/><rect x="1253.5" y="63" width="1.2" height="2.5"/></g>
<text x="1261" y="63" font-size="15" fill="#262626" text-anchor="start" font-weight="400" textLength="104" lengthAdjust="spacingAndGlyphs" >Animation Pane</text>
<path d="M1244.4,79.6 L1252,79.6 L1246.6,85.6 L1253,85.6 L1239.8,98.6 L1243.8,89.8 L1239.2,89.8Z" fill="#ececec" stroke="#ababab" stroke-width="1.2" stroke-linejoin="round"/>
<text x="1261" y="95" font-size="15" fill="#b3b3b3" text-anchor="start" font-weight="400" textLength="48" lengthAdjust="spacingAndGlyphs" >Trigger</text>
<path d="M1312.5,88 l2.5,2.5 l2.5,-2.5" fill="none" stroke="#b3b3b3" stroke-width="1.1"/>
<path d="M1253.6,117.6 L1249.2,117.6 L1246.1,112 L1243,117.6 L1236.6,117.6 L1241.6,121.8 L1239.3,130 L1244.5,126.8" fill="#f2f2f2" stroke="#ababab" stroke-width="1.2" stroke-linejoin="round"/><path d="M1249.5,123 L1255.5,118.8 L1256.5,120.3 L1251.5,125Z" fill="#b8b8b8" stroke="#ababab" stroke-width="0.8"/><path d="M1245.5,125.5 L1249.5,122.5 L1252.5,126 L1248.5,130.5Z" fill="#c4c4c4" stroke="#ababab" stroke-width="1"/>
<text x="1261" y="127" font-size="15" fill="#b3b3b3" text-anchor="start" font-weight="400" textLength="118.5" lengthAdjust="spacingAndGlyphs" >Animation Painter</text>
<text x="1264" y="155" font-size="13" fill="#262626" text-anchor="middle" font-weight="400" >Advanced Animation</text>
<line x1="1399.5" y1="44" x2="1399.5" y2="155" stroke="#dcdcdc"/>
<path d="M1416.5,47.5 L1430.5,57.2 L1416.5,66.5Z" fill="none" stroke="#b8b8b8" stroke-width="1.2"/>
<text x="1438" y="63" font-size="15" fill="#b3b3b3" text-anchor="start" font-weight="400" textLength="34" lengthAdjust="spacingAndGlyphs" >Start:</text>
<rect x="1478.5" y="42.5" width="117" height="28.5" rx="4" fill="#f0f0f0" stroke="#e3e3e3"/>
<text x="1482" y="63" font-size="15" fill="#262626" text-anchor="start" font-weight="400" textLength="54.5" lengthAdjust="spacingAndGlyphs" >On Click</text>
<path d="M1585,57 l3,3 l3,-3" fill="none" stroke="#b3b3b3" stroke-width="1"/>
<circle cx="1424" cy="89" r="9.3" fill="none" stroke="#b8b8b8" stroke-width="1.3"/>
<path d="M1423.5,83 v6.5 h5" fill="none" stroke="#a8a8a8" stroke-width="1.2"/>
<text x="1438" y="95" font-size="15" fill="#b3b3b3" text-anchor="start" font-weight="400" textLength="61" lengthAdjust="spacingAndGlyphs" >Duration:</text>
<rect x="1505.5" y="74.5" width="80" height="29" rx="4" fill="#f0f0f0" stroke="#e6e6e6"/>
<path d="M1571.5,83 l2.5,-2.5 l2.5,2.5 M1571.5,95 l2.5,2.5 l2.5,-2.5" fill="none" stroke="#b3b3b3" stroke-width="1"/>
<circle cx="1424" cy="121" r="9.3" fill="none" stroke="#b8b8b8" stroke-width="1.3"/>
<path d="M1424,121 v-9.3 a9.3,9.3 0 0 1 9.3,9.3z" fill="#d8d8d8"/>
<circle cx="1424" cy="121" r="9.3" fill="none" stroke="#b8b8b8" stroke-width="1.3"/>
<path d="M1423.5,115 v6.5 h5" fill="none" stroke="#a8a8a8" stroke-width="1.2"/>
<text x="1438" y="127" font-size="15" fill="#b3b3b3" text-anchor="start" font-weight="400" textLength="41" lengthAdjust="spacingAndGlyphs" >Delay:</text>
<rect x="1503.5" y="106.5" width="80" height="29" rx="4" fill="#f0f0f0" stroke="#e6e6e6"/>
<path d="M1569.5,115 l2.5,-2.5 l2.5,2.5 M1569.5,127 l2.5,2.5 l2.5,-2.5" fill="none" stroke="#b3b3b3" stroke-width="1"/>
<text x="1573" y="155" font-size="13" fill="#262626" text-anchor="middle" font-weight="400" >Timing</text>
<line x1="1603.5" y1="51" x2="1603.5" y2="130" stroke="#dcdcdc"/>
<text x="1611" y="63" font-size="15" fill="#262626" text-anchor="start" font-weight="400" textLength="125" lengthAdjust="spacingAndGlyphs" >Reorder Animation</text>
<path d="M1620.5,91 l5.5,-5.5 l5.5,5.5" fill="none" stroke="#b8b8b8" stroke-width="1.2"/>
<text x="1641" y="95" font-size="15" fill="#b3b3b3" text-anchor="start" font-weight="400" textLength="83.5" lengthAdjust="spacingAndGlyphs" >Move Earlier</text>
<path d="M1620.5,118.5 l5.5,5.5 l5.5,-5.5" fill="none" stroke="#b8b8b8" stroke-width="1.2"/>
<text x="1641" y="127" font-size="15" fill="#b3b3b3" text-anchor="start" font-weight="400" textLength="74" lengthAdjust="spacingAndGlyphs" >Move Later</text>
<line x1="1748.5" y1="44" x2="1748.5" y2="155" stroke="#dcdcdc"/>
<path d="M1772,152 l6,-6 l6,6" fill="none" stroke="#262626" stroke-width="1.2"/>
<rect x="280" y="4.9" width="108.9" height="35.7" rx="3" fill="none" stroke="#fe1e16" stroke-width="4"/>
<path d="M290.5,33.5 H374.5" stroke="#b5391c" stroke-width="3" stroke-linecap="round"/>
<path d="M407,25.3 L1205,64.3 L1204.5,58.6 L1219,67.5 L1204.5,75 L1205,70.5 L407,26.6Z" fill="#ff1e1e"/>
</svg>
</body></html>
